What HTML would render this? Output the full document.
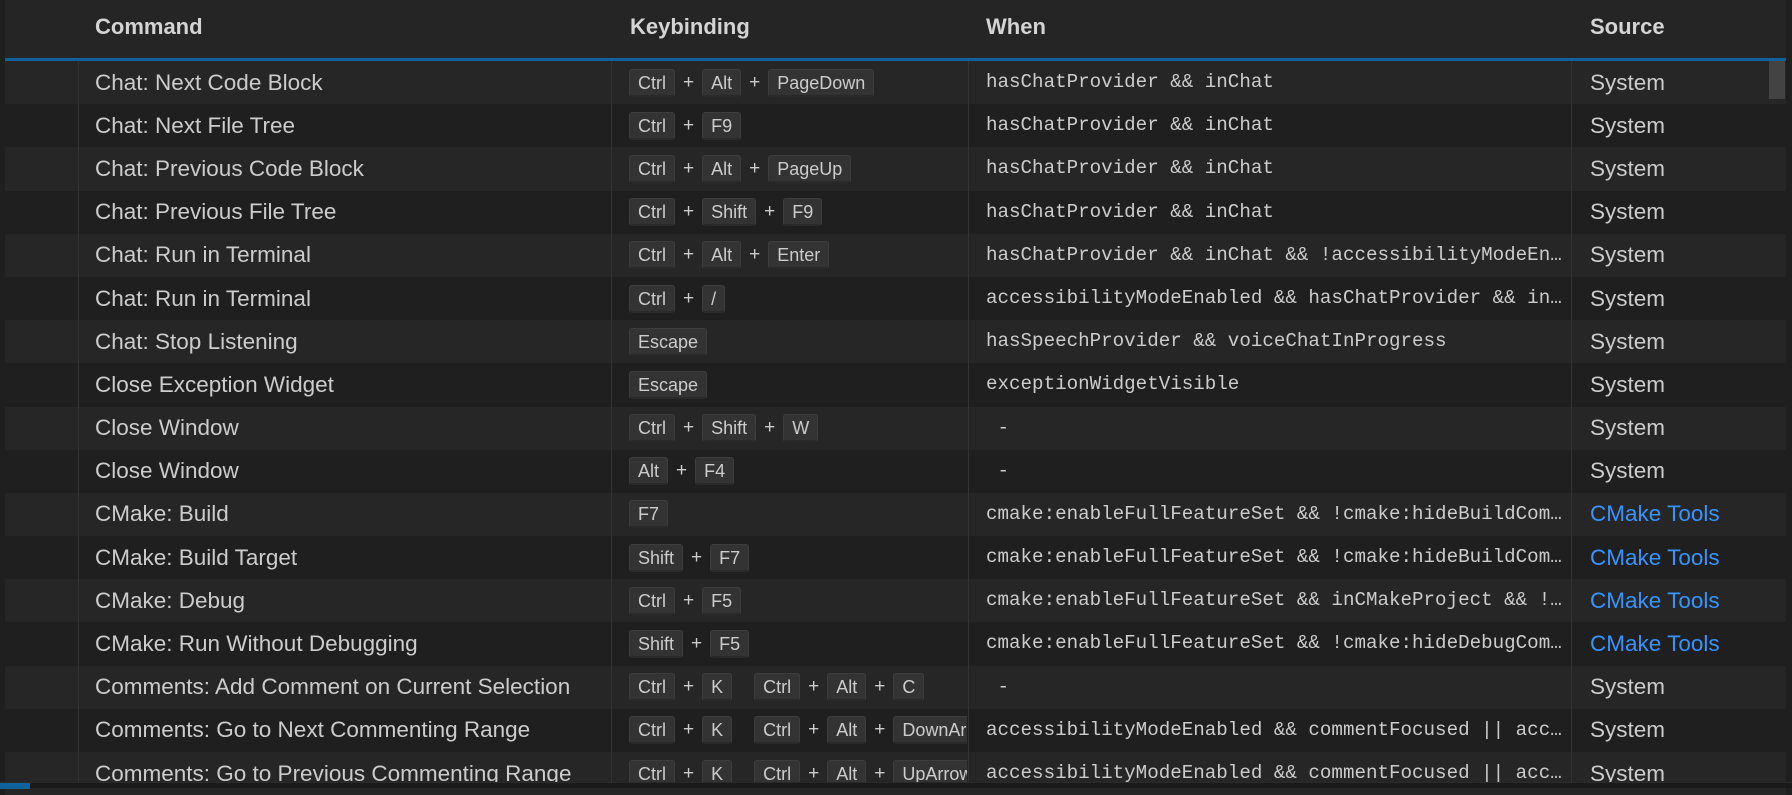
<!DOCTYPE html>
<html><head><meta charset="utf-8"><style>
*{margin:0;padding:0;box-sizing:border-box}
body{width:1792px;height:788px;background:#1f1f1f;overflow:hidden;font-family:"Liberation Sans",sans-serif;color:#cccccc;position:relative}
.hdr{position:absolute;left:5px;top:0;width:1781px;height:61px;background:#252526;border-bottom:3px solid #0e639c;}
.hdr div{position:absolute;top:14px;font-weight:bold;font-size:22px;color:#d4d4d4}
.rows{position:absolute;left:5px;top:61px;width:1781px}
.row{position:relative;height:43.2px;font-size:22.5px}
.row:nth-child(odd){background:#262626}
.row:nth-child(even){background:#1f1f1f}
.c{position:absolute;top:0;height:100%;display:flex;align-items:center;white-space:nowrap;overflow:hidden}
.cmd{left:90px;width:515px}
.kb{left:624px;width:338px}
.wh{left:981px;width:580px;font-family:"Liberation Mono",monospace;font-size:19.2px;color:#cccccc;text-overflow:ellipsis;display:block;line-height:43px}
.src{left:1585px}
.link{color:#3794ff}
.k{display:inline-block;background:#333333;border:1px solid #3d3d3d;border-bottom-color:#2a2a2a;box-shadow:inset 0 -1px 0 #292929;border-radius:3px;font-size:18px;padding:0 8px;height:28px;line-height:27px;color:#cccccc}
.p{margin:0 8px;font-size:19px}
.g{margin-left:22px}
.vl{position:absolute;top:61px;bottom:5px;width:1px;background:#333}
.sb{position:absolute;left:1769px;top:61px;width:16px;height:38px;background:#434343}
.bot{position:absolute;left:0;top:782px;width:1792px;height:6px;background:#1a1a1a;border-top:1px solid #2b2b2b}
</style></head><body>
<div class="hdr">
<div style="left:90px">Command</div>
<div style="left:625px">Keybinding</div>
<div style="left:981px">When</div>
<div style="left:1585px">Source</div>
</div>
<div class="rows">
<div class="row"><div class="c cmd">Chat: Next Code Block</div><div class="c kb"><span class="k">Ctrl</span><span class="p">+</span><span class="k">Alt</span><span class="p">+</span><span class="k">PageDown</span></div><div class="c wh">hasChatProvider &amp;&amp; inChat</div><div class="c src">System</div></div>
<div class="row"><div class="c cmd">Chat: Next File Tree</div><div class="c kb"><span class="k">Ctrl</span><span class="p">+</span><span class="k">F9</span></div><div class="c wh">hasChatProvider &amp;&amp; inChat</div><div class="c src">System</div></div>
<div class="row"><div class="c cmd">Chat: Previous Code Block</div><div class="c kb"><span class="k">Ctrl</span><span class="p">+</span><span class="k">Alt</span><span class="p">+</span><span class="k">PageUp</span></div><div class="c wh">hasChatProvider &amp;&amp; inChat</div><div class="c src">System</div></div>
<div class="row"><div class="c cmd">Chat: Previous File Tree</div><div class="c kb"><span class="k">Ctrl</span><span class="p">+</span><span class="k">Shift</span><span class="p">+</span><span class="k">F9</span></div><div class="c wh">hasChatProvider &amp;&amp; inChat</div><div class="c src">System</div></div>
<div class="row"><div class="c cmd">Chat: Run in Terminal</div><div class="c kb"><span class="k">Ctrl</span><span class="p">+</span><span class="k">Alt</span><span class="p">+</span><span class="k">Enter</span></div><div class="c wh">hasChatProvider &amp;&amp; inChat &amp;&amp; !accessibilityModeEnabled</div><div class="c src">System</div></div>
<div class="row"><div class="c cmd">Chat: Run in Terminal</div><div class="c kb"><span class="k">Ctrl</span><span class="p">+</span><span class="k">/</span></div><div class="c wh">accessibilityModeEnabled &amp;&amp; hasChatProvider &amp;&amp; inChat</div><div class="c src">System</div></div>
<div class="row"><div class="c cmd">Chat: Stop Listening</div><div class="c kb"><span class="k">Escape</span></div><div class="c wh">hasSpeechProvider &amp;&amp; voiceChatInProgress</div><div class="c src">System</div></div>
<div class="row"><div class="c cmd">Close Exception Widget</div><div class="c kb"><span class="k">Escape</span></div><div class="c wh">exceptionWidgetVisible</div><div class="c src">System</div></div>
<div class="row"><div class="c cmd">Close Window</div><div class="c kb"><span class="k">Ctrl</span><span class="p">+</span><span class="k">Shift</span><span class="p">+</span><span class="k">W</span></div><div class="c wh">&nbsp;-</div><div class="c src">System</div></div>
<div class="row"><div class="c cmd">Close Window</div><div class="c kb"><span class="k">Alt</span><span class="p">+</span><span class="k">F4</span></div><div class="c wh">&nbsp;-</div><div class="c src">System</div></div>
<div class="row"><div class="c cmd">CMake: Build</div><div class="c kb"><span class="k">F7</span></div><div class="c wh">cmake:enableFullFeatureSet &amp;&amp; !cmake:hideBuildCommand</div><div class="c src link">CMake Tools</div></div>
<div class="row"><div class="c cmd">CMake: Build Target</div><div class="c kb"><span class="k">Shift</span><span class="p">+</span><span class="k">F7</span></div><div class="c wh">cmake:enableFullFeatureSet &amp;&amp; !cmake:hideBuildCommand</div><div class="c src link">CMake Tools</div></div>
<div class="row"><div class="c cmd">CMake: Debug</div><div class="c kb"><span class="k">Ctrl</span><span class="p">+</span><span class="k">F5</span></div><div class="c wh">cmake:enableFullFeatureSet &amp;&amp; inCMakeProject &amp;&amp; !cmake</div><div class="c src link">CMake Tools</div></div>
<div class="row"><div class="c cmd">CMake: Run Without Debugging</div><div class="c kb"><span class="k">Shift</span><span class="p">+</span><span class="k">F5</span></div><div class="c wh">cmake:enableFullFeatureSet &amp;&amp; !cmake:hideDebugCommand</div><div class="c src link">CMake Tools</div></div>
<div class="row"><div class="c cmd">Comments: Add Comment on Current Selection</div><div class="c kb"><span class="k">Ctrl</span><span class="p">+</span><span class="k">K</span><span class="k g">Ctrl</span><span class="p">+</span><span class="k">Alt</span><span class="p">+</span><span class="k">C</span></div><div class="c wh">&nbsp;-</div><div class="c src">System</div></div>
<div class="row"><div class="c cmd">Comments: Go to Next Commenting Range</div><div class="c kb"><span class="k">Ctrl</span><span class="p">+</span><span class="k">K</span><span class="k g">Ctrl</span><span class="p">+</span><span class="k">Alt</span><span class="p">+</span><span class="k">DownArrow</span></div><div class="c wh">accessibilityModeEnabled &amp;&amp; commentFocused || accessibility</div><div class="c src">System</div></div>
<div class="row"><div class="c cmd">Comments: Go to Previous Commenting Range</div><div class="c kb"><span class="k">Ctrl</span><span class="p">+</span><span class="k">K</span><span class="k g">Ctrl</span><span class="p">+</span><span class="k">Alt</span><span class="p">+</span><span class="k">UpArrow</span></div><div class="c wh">accessibilityModeEnabled &amp;&amp; commentFocused || accessibility</div><div class="c src">System</div></div>
</div>
<div class="vl" style="left:78px"></div>
<div class="vl" style="left:611px"></div>
<div class="vl" style="left:968px"></div>
<div class="vl" style="left:1571px"></div>
<div class="sb"></div>
<div class="bot"><div style="width:30px;height:6px;background:#0e639c"></div></div>
</body></html>
